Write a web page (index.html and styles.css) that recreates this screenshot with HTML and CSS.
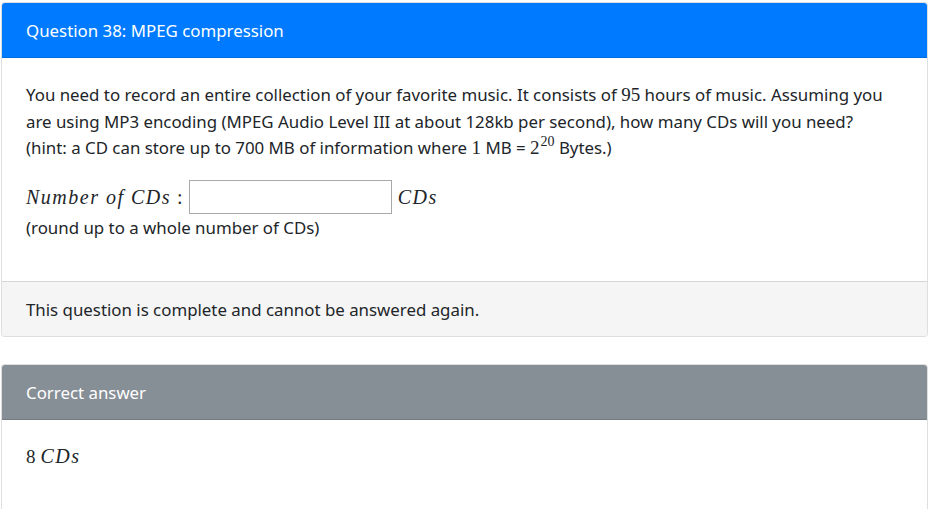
FILE: index.html
```html
<!DOCTYPE html>
<html>
<head>
<meta charset="utf-8">
<link rel="stylesheet" href="styles.css">
</head>
<body>
<div class="page">
  <div class="card">
    <div class="card-header primary">Question 38: MPEG compression</div>
    <div class="card-body">
      <p class="question">You need to record an entire collection of your favorite music. It consists of <span class="mn">95</span> hours of music. Assuming you are using MP3 encoding (MPEG Audio Level III at about 128kb per second), how many CDs will you need? (hint: a CD can store up to 700 MB of information where <span class="mn">1</span> MB = <span class="mn">2<sup>20</sup></span> Bytes.)</p>
      <div class="answer-row">
        <span class="mi">Number of CDs</span><span class="mo">:</span>
        <input class="answer-input" type="text">
        <span class="mi">CDs</span>
      </div>
      <p class="note">(round up to a whole number of CDs)</p>
    </div>
    <div class="card-footer">This question is complete and cannot be answered again.</div>
  </div>

  <div class="card">
    <div class="card-header secondary">Correct answer</div>
    <div class="card-body answer-body">
      <span class="mn">8</span><span class="mi answer-unit">CDs</span>
    </div>
  </div>
</div>
</body>
</html>
```

FILE: styles.css
```css
html, body {
  margin: 0;
  padding: 0;
  background: #fff;
}
body {
  font-family: "Noto Sans", "Open Sans", sans-serif;
  font-size: 16.85px;
  line-height: 24px;
  color: #212529;
}
.page {
  padding: 2px 1px;
  display: flex;
  flex-direction: column;
  gap: 27px;
}
.card {
  border: 1px solid rgba(0, 0, 0, 0.125);
  border-radius: 4px;
  overflow: hidden;
  background: #fff;
}
.card-header {
  padding: 16px 24px 14px;
  color: #fff;
  border-bottom: 1px solid rgba(0, 0, 0, 0.125);
}
.card-header.primary {
  background: #007bff;
}
.card-header.secondary {
  background: #868e96;
}
.card-body {
  padding: 24px 24px 41px;
}
.question {
  margin: 0 0 18px;
  max-width: 865px;
  line-height: 26.5px;
}
.mn {
  font-family: "Liberation Serif", "DejaVu Serif", serif;
  font-size: 19px;
}
.mn sup {
  font-size: 14px;
  line-height: 0;
  vertical-align: 8px;
  margin-left: 1px;
}
.mi {
  font-family: "Liberation Serif", "DejaVu Serif", serif;
  font-style: italic;
  font-size: 20px;
  letter-spacing: 1.5px;
}
.mo {
  font-family: "Liberation Serif", "DejaVu Serif", serif;
  font-size: 20px;
  margin-left: 2px;
}
.answer-row {
  display: flex;
  align-items: center;
  gap: 4px;
  height: 34px;
}
.answer-input {
  width: 203px;
  height: 34px;
  box-sizing: border-box;
  border: 1px solid #a9a9a9;
  margin: 0 2px 0 2px;
  padding: 0 4px;
  font-size: 16px;
}
.note {
  margin: 2px 0 0;
}
.card-footer {
  padding: 16px 24px 14px;
  background: #f5f5f5;
  border-top: 1px solid rgba(0, 0, 0, 0.125);
}
.answer-body {
  padding: 24px 24px 60px;
}
.answer-unit {
  margin-left: 5px;
}
```
